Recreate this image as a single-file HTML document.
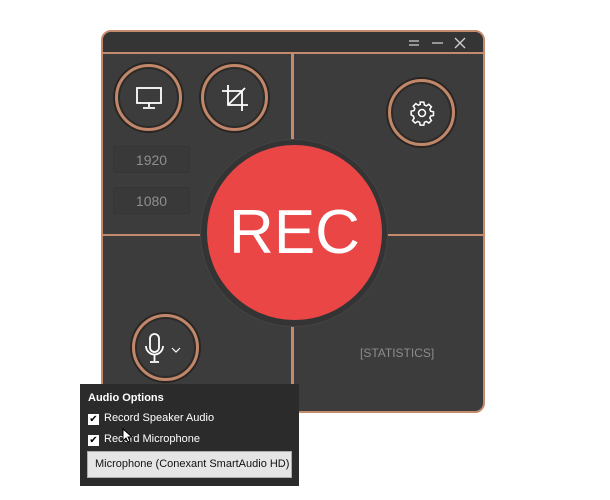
<!DOCTYPE html>
<html><head><meta charset="utf-8"><style>
*{margin:0;padding:0;box-sizing:border-box}
body{width:610px;height:500px;background:#fff;position:relative;overflow:hidden;font-family:"Liberation Sans",sans-serif}
.win{position:absolute;left:101px;top:30px;width:384px;height:383px;border:2px solid #c38a6b;border-radius:10px;background:#3c3c3c;overflow:hidden}
.title{position:absolute;left:0;top:0;width:100%;height:22px;background:#353535;border-bottom:2px solid #c38a6b}
.vl{position:absolute;background:#c38a6b}
.btn{position:absolute;width:67px;height:67px;border-radius:50%;border:3px solid #c0876a;box-shadow:0 0 0 2px #2a2522, inset 0 0 0 2px #2e2a28;background:#3c3c3c}
.btn svg{position:absolute;left:50%;top:50%;transform:translate(-50%,-50%)}
.inp{position:absolute;left:113px;width:77px;height:27px;background:#393939;border:1px solid #353535;border-radius:3px;color:#8e8e8e;font-size:14px;text-align:center;line-height:26px}
</style></head><body>
<div class="win">
 <div class="title"></div>
 <div class="vl" style="left:188px;top:22px;width:3px;height:360px"></div>
 <div class="vl" style="left:0;top:202px;width:384px;height:2px"></div>
</div>
<svg style="position:absolute;left:405px;top:36px" width="70" height="14">
 <g stroke="#cfcfcf" stroke-width="1.3" fill="none"><path d="M4 5h10M4 9h10M27 7h11M50 2l10 10M60 2l-10 10"/></g>
</svg>
<div style="position:absolute;left:200px;top:139px;width:188px;height:188px;border-radius:50%;background:#343434;border:1px solid #444"></div>
<div style="position:absolute;left:207px;top:145px;width:175px;height:175px;border-radius:50%;background:#ea4646;color:#fff;font-size:62px;text-align:center;line-height:175px">REC</div>
<div class="btn" style="left:115px;top:64px"><svg width="30" height="26" viewBox="0 0 30 26"><g stroke="#fff" stroke-width="1.8" fill="none"><rect x="3" y="3" width="24" height="15"/><path d="M15 18v4M9 23h12"/></g></svg></div>
<div class="btn" style="left:201px;top:64px"><svg width="32" height="32" viewBox="0 0 32 32"><g stroke="#fff" stroke-width="1.8" fill="none"><path d="M9 3v20h20M3 9h20v20M9 23L26 6"/></g></svg></div>
<div class="btn" style="left:388px;top:79px"><svg width="26" height="26" viewBox="0 0 24 24"><g stroke="#fff" stroke-width="1.4" fill="none"><circle cx="12" cy="12" r="3.2"/><path d="M10.3 2h3.4l.5 2.6 1.9.8 2.2-1.5 2.4 2.4-1.5 2.2.8 1.9 2.6.5v3.4l-2.6.5-.8 1.9 1.5 2.2-2.4 2.4-2.2-1.5-1.9.8-.5 2.6h-3.4l-.5-2.6-1.9-.8-2.2 1.5-2.4-2.4 1.5-2.2-.8-1.9L2 13.7v-3.4l2.6-.5.8-1.9L3.9 5.7l2.4-2.4 2.2 1.5 1.9-.8z"/></g></svg></div>
<div class="btn" style="left:132px;top:314px"><svg width="50" height="34" viewBox="0 0 50 34"><g stroke="#fff" stroke-width="1.8" fill="none"><rect x="9" y="3" width="9" height="18" rx="4.5"/><path d="M5 15a8.5 8.5 0 0 0 17 0M13.5 24v6M9 31h9"/><path d="M31 17l4 4 4-4" stroke-width="1.2"/></g></svg></div>
<div class="inp" style="top:146px">1920</div>
<div class="inp" style="top:187px">1080</div>
<div style="position:absolute;left:360px;top:346px;color:#8c8c8c;font-size:12px">[STATISTICS]</div>
<div style="position:absolute;left:80px;top:384px;width:219px;height:102px;background:#2b2b2b;color:#fff;font-size:11px">
 <div style="position:absolute;left:8px;top:8px;font-weight:bold">Audio Options</div>
 <div style="position:absolute;left:8px;top:28px"><span style="display:inline-block;width:11px;height:11px;background:#fff;color:#000;font-size:10px;line-height:11px;text-align:center;vertical-align:-1px;margin-right:5px">✔</span>Record Speaker Audio</div>
 <div style="position:absolute;left:8px;top:49px"><span style="display:inline-block;width:11px;height:11px;background:#fff;color:#000;font-size:10px;line-height:11px;text-align:center;vertical-align:-1px;margin-right:5px">✔</span>Record Microphone</div>
 <div style="position:absolute;left:7px;top:67px;width:205px;height:27px;background:#e5e5e5;border:1px solid #adadad;color:#111;line-height:25px;padding-left:7px">Microphone (Conexant SmartAudio HD)<span style="position:absolute;right:7px;top:0;font-size:8px;color:#555">⌄</span></div>
</div>
<svg style="position:absolute;left:122px;top:428px" width="12" height="16"><path d="M1 1v12l3-3 2 4 2-1-2-4h4z" fill="#fff" stroke="#000" stroke-width="1"/></svg>
</body></html>
